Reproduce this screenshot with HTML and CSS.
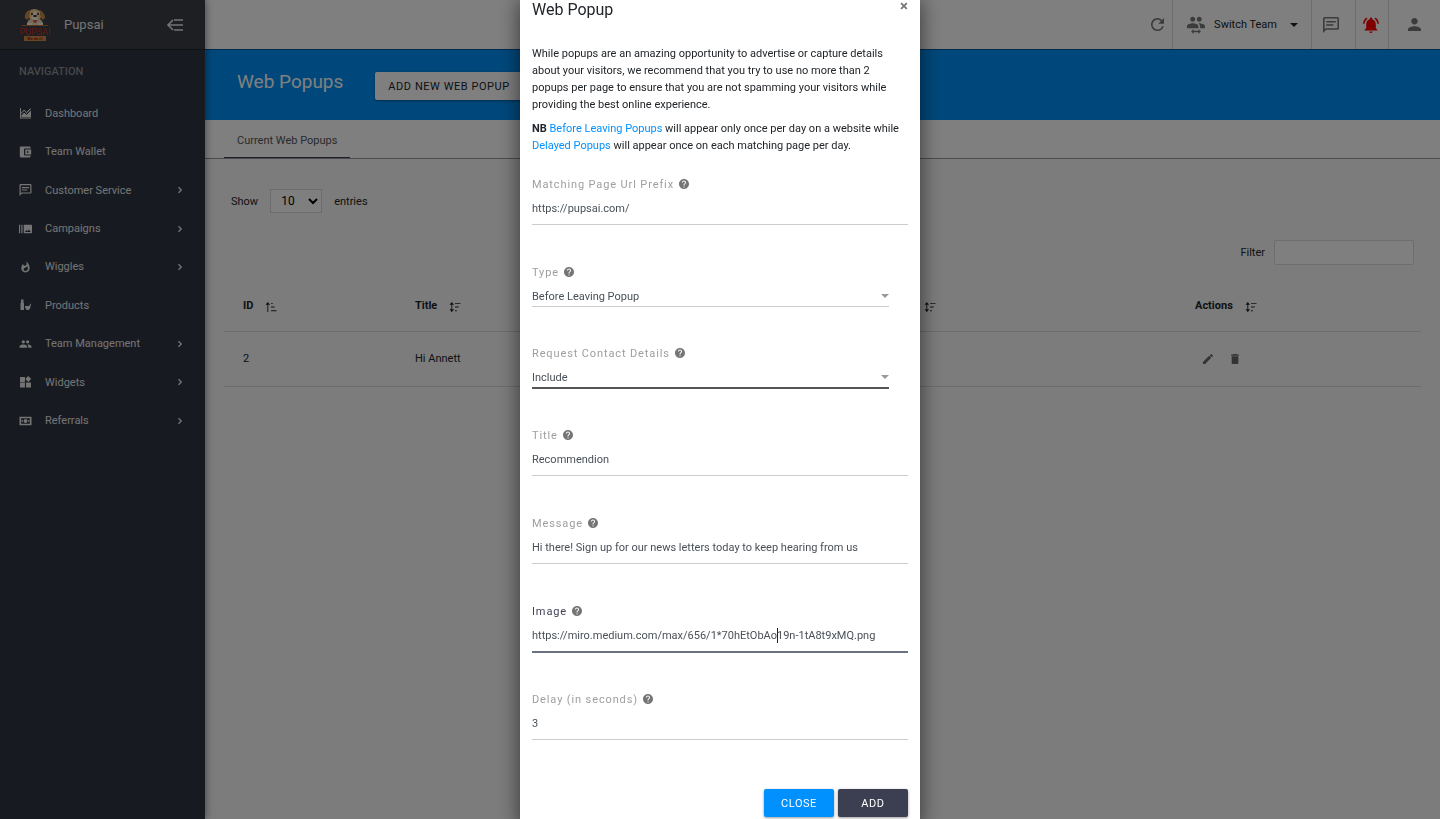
FILE: index.html
```html
<!DOCTYPE html>
<html lang="en">
<head>
    <meta charset="UTF-8">
    <meta name="viewport" content="width=device-width, initial-scale=1.0">
    <title>Pupsai - Web Popups</title>
    <link rel="stylesheet" href="styles.css">
</head>
<body>
    <!-- shared icons -->
    <svg class="sprite" aria-hidden="true">
        <symbol id="i-chart" viewBox="0 0 24 24"><path d="M1 2h2v19h20v2H1z"/><path d="M4 20v-5l5-6 5 4 9-9v16z"/><path d="M3 13l6-7 5 5 8-8" fill="none" stroke="currentColor" stroke-width="2"/><path d="M4 16l5-6 5 5 9-9" fill="none" stroke="#2e3442" stroke-width="2"/></symbol>
        <symbol id="i-wallet" viewBox="2 2 21 20"><path d="M21 18v1c0 1.1-.9 2-2 2H5c-1.11 0-2-.9-2-2V5c0-1.1.89-2 2-2h14c1.1 0 2 .9 2 2v1h-9c-1.11 0-2 .9-2 2v8c0 1.1.89 2 2 2h9zm-9-2h10V8H12v8zm4-2.5c-.83 0-1.5-.67-1.5-1.5s.67-1.5 1.5-1.5 1.5.67 1.5 1.5-.67 1.5-1.5 1.5z"/></symbol>
        <symbol id="i-chat" viewBox="2 2 20 20"><path d="M20 2H4c-1.1 0-2 .9-2 2v18l4-4h14c1.1 0 2-.9 2-2V4c0-1.1-.9-2-2-2zm0 14H5.17L4 17.17V4h16v12zM6 11h9v2H6v-2zm0-4h12v2H6V7z"/></symbol>
        <symbol id="i-burst" viewBox="1 2 22 20"><path d="M1 5h2v14H1zm4 0h2v14H5zm17 0H10c-.55 0-1 .45-1 1v12c0 .55.45 1 1 1h12c.55 0 1-.45 1-1V6c0-.55-.45-1-1-1zM11 17l2.5-3.15L15.29 16l2.5-3.22L21 17H11z"/></symbol>
        <symbol id="i-fire" viewBox="1 0 22 23"><path d="M13.5.67s.74 2.65.74 4.8c0 2.06-1.35 3.73-3.41 3.73-2.07 0-3.63-1.67-3.63-3.73l.03-.36C5.21 7.51 4 10.62 4 14c0 4.42 3.58 8 8 8s8-3.58 8-8C20 8.61 17.41 3.8 13.5.67zM11.71 19c-1.78 0-3.22-1.4-3.22-3.14 0-1.62 1.05-2.76 2.81-3.12 1.77-.36 3.6-1.21 4.62-2.58.39 1.29.59 2.65.59 4.04 0 2.65-2.15 4.8-4.8 4.8z"/></symbol>
        <symbol id="i-bottle" viewBox="0 0 24 24"><path d="M3 1h5v5l1 3v13H2V9l1-3z"/><path d="M11 14h8l3-5 1 1-1 4c0 4-1 6-3 7v1h-5v-1c-2-1-3-3-3-7z"/></symbol>
        <symbol id="i-group" viewBox="1 1 22 22"><path d="M16 11c1.66 0 2.99-1.34 2.99-3S17.66 5 16 5c-1.66 0-3 1.34-3 3s1.34 3 3 3zm-8 0c1.66 0 2.99-1.34 2.99-3S9.66 5 8 5C6.34 5 5 6.34 5 8s1.34 3 3 3zm0 2c-2.33 0-7 1.17-7 3.5V19h14v-2.5c0-2.33-4.67-3.5-7-3.5zm8 0c-.29 0-.62.02-.97.05 1.16.84 1.97 1.97 1.97 3.45V19h6v-2.5c0-2.33-4.67-3.5-7-3.5z"/></symbol>
        <symbol id="i-widgets" viewBox="1 1 22 22"><path d="M2 3h9v9H2zM2 13h9v9H2zM13 13h9v9h-9zM17 1l5.500 5.500L17 12l-5.500-5.500z"/></symbol>
        <symbol id="i-cash" viewBox="1 1 22 22"><path fill-rule="evenodd" d="M1 4h22v16H1zM4 7v10h16V7zM12 8.500a3.500 3.500 0 010 7 3.500 3.500 0 010-7zM5 10h2v4H5zM17 10h2v4h-2z"/></symbol>
        <symbol id="i-chevron" viewBox="0 0 24 24"><path d="M8.590 16.590L13.170 12 8.590 7.410 10 6l6 6-6 6z" stroke="currentColor"/></symbol>
        <symbol id="i-back" viewBox="0 0 18 14"><path d="M7 2L2 7l5 5M2 7h15M8 2h9M8 12h9" fill="none" stroke="currentColor" stroke-width="1.600"/></symbol>
        <symbol id="i-refresh" viewBox="4 4 16 16"><path d="M17.65 6.35A7.958 7.958 0 0012 4c-4.42 0-7.99 3.58-7.99 8s3.57 8 7.99 8c3.73 0 6.84-2.55 7.73-6h-2.08A5.99 5.99 0 0112 18c-3.31 0-6-2.69-6-6s2.690-6 6-6c1.660 0 3.140.690 4.220 1.780L13 11h7V4l-2.350 2.350z"/></symbol>
        <symbol id="i-switch" viewBox="1 2 22 22"><path d="M16 9c1.660 0 3-1.340 3-3s-1.340-3-3-3-3 1.340-3 3 1.340 3 3 3zM8 9c1.660 0 3-1.340 3-3S9.660 3 8 3 5 4.340 5 6s1.340 3 3 3zM8 11c-2.330 0-7 1.170-7 3.500V17h14v-2.500C15 12.170 10.330 11 8 11zM16 11l-1 .050c1.200.850 2 2 2 3.450V17h6v-2.500c0-2.330-4.670-3.500-7-3.500z"/><path d="M6 21l3-3v2h6v-2l3 3-3 3v-2H9v2z"/></symbol>
        <symbol id="i-bell" viewBox="2 2 20 20"><path d="M7.58 4.08L6.15 2.65C3.75 4.48 2.17 7.3 2.03 10.5h2c.15-2.65 1.51-4.97 3.55-6.42zm12.39 6.42h2c-.15-3.2-1.73-6.02-4.12-7.85l-1.42 1.43c2.02 1.45 3.39 3.77 3.54 6.42zM18 11c0-3.07-1.64-5.64-4.5-6.32V4c0-.83-.67-1.5-1.5-1.5s-1.5.67-1.5 1.5v.68C7.63 5.36 6 7.92 6 11v5l-2 2v1h16v-1l-2-2v-5zm-6 11c.14 0 .27-.01.4-.04.65-.14 1.18-.58 1.44-1.18.1-.24.15-.5.15-.78h-4c.01 1.1.9 2 2.01 2z"/></symbol>
        <symbol id="i-person" viewBox="4 4 16 16"><path d="M12 12c2.21 0 4-1.79 4-4s-1.79-4-4-4-4 1.79-4 4 1.79 4 4 4zm0 2c-2.67 0-8 1.34-8 4v2h16v-2c0-2.66-5.33-4-8-4z"/></symbol>
        <symbol id="i-down" viewBox="0 0 10 5"><path d="M0 0h10L5 5z"/></symbol>
        <symbol id="i-sort-asc" viewBox="0 0 12 12"><path d="M2 1h1v10H2zM0 3l2.500-3L5 3zM6 1h2v1H6zM6 5h4v1H6zM6 9h6v1H6z"/></symbol>
        <symbol id="i-sort-desc" viewBox="0 0 12 12"><path d="M2 1h1v10H2zM0 3l2.500-3L5 3zM0 8h5l-2.500 3zM6 1h6v1H6zM6 5h4v1H6zM6 9h2v1H6z"/></symbol>
        <symbol id="i-edit" viewBox="3 3 18 18"><path d="M3 17.25V21h3.75L17.81 9.94l-3.75-3.75L3 17.25zM20.71 7.04a1 1 0 000-1.41l-2.34-2.34a1 1 0 00-1.41 0l-1.83 1.83 3.75 3.75 1.83-1.830z"/></symbol>
        <symbol id="i-delete" viewBox="3 3 18 18"><path d="M6 19c0 1.100.900 2 2 2h8c1.100 0 2-.900 2-2V7H6v12zM19 4h-3.500l-1-1h-5l-1 1H5v2h14V4z"/></symbol>
        <symbol id="i-help" viewBox="2 2 20 20"><path d="M12 2C6.48 2 2 6.48 2 12s4.48 10 10 10 10-4.48 10-10S17.52 2 12 2zm1 17h-2v-2h2v2zm2.07-7.75l-.9.92C13.45 12.9 13 13.5 13 15h-2v-.5c0-1.1.45-2.100 1.170-2.830l1.240-1.260c.370-.360.590-.860.590-1.410 0-1.100-.900-2-2-2s-2 .900-2 2H8c0-2.210 1.790-4 4-4s4 1.790 4 4c0 .880-.360 1.680-.930 2.250z"/></symbol>
    </svg>

    <div class="app">
        <aside class="sidebar">
            <div class="brand">
                <svg class="logo" viewBox="0 0 32 34" aria-hidden="true">
                    <path d="M8 17q0-5 4-6h8q4 1 4 6z" fill="#ecd9bd"/>
                    <path d="M10 3q5-4 11 0l1 6q-2 5-6 5t-6-5z" fill="#edc791"/>
                    <path d="M10 2q-5 3-4 8 2 3 4 0l1-6zM21 2q5 3 5 8-2 3-4 0l-1-6z" fill="#c98a45"/>
                    <path d="M15 3h2l2 7q-1 3-3 3t-4-3z" fill="#fff0d8"/>
                    <circle cx="13" cy="6" r="1" fill="#2a1c14"/>
                    <circle cx="19" cy="6" r="1" fill="#2a1c14"/>
                    <ellipse cx="16" cy="8" rx="2" ry="1" fill="#2a1c14"/>
                    <path d="M14 12h4q0 3-2 3t-2-3z" fill="#c9604a"/>
                    <path d="M8 15h5v2H8zM19 15h5v2h-5z" fill="#fff0d8"/>
                    <path d="M3 17h26v1H3z" fill="#b5713c"/>
                    <text x="16" y="27" class="logo-name">PUPSAI</text>
                    <path d="M5 28h22v5H5z" fill="#d08a4a"/>
                    <text x="16" y="32" class="logo-tag">We do it!</text>
                </svg>
                <span class="brand-name">Pupsai</span>
                <button class="collapse" aria-label="Collapse menu"><svg><use href="#i-back"/></svg></button>
            </div>
            <h2 class="nav-title">NAVIGATION</h2>
            <nav class="nav">
                <a href="#"><svg><use href="#i-chart"/></svg>Dashboard</a>
                <a href="#"><svg><use href="#i-wallet"/></svg>Team Wallet</a>
                <a href="#"><svg><use href="#i-chat"/></svg>Customer Service<svg class="more"><use href="#i-chevron"/></svg></a>
                <a href="#"><svg><use href="#i-burst"/></svg>Campaigns<svg class="more"><use href="#i-chevron"/></svg></a>
                <a href="#"><svg><use href="#i-fire"/></svg>Wiggles<svg class="more"><use href="#i-chevron"/></svg></a>
                <a href="#"><svg><use href="#i-bottle"/></svg>Products</a>
                <a href="#"><svg><use href="#i-group"/></svg>Team Management<svg class="more"><use href="#i-chevron"/></svg></a>
                <a href="#"><svg><use href="#i-widgets"/></svg>Widgets<svg class="more"><use href="#i-chevron"/></svg></a>
                <a href="#"><svg><use href="#i-cash"/></svg>Referrals<svg class="more"><use href="#i-chevron"/></svg></a>
            </nav>
        </aside>

        <div class="main">
            <header class="topbar">
                <button class="top-btn refresh" aria-label="Refresh"><svg><use href="#i-refresh"/></svg></button>
                <button class="top-btn switch"><svg class="team"><use href="#i-switch"/></svg>Switch Team<svg class="down"><use href="#i-down"/></svg></button>
                <button class="top-btn chat" aria-label="Messages"><svg><use href="#i-chat"/></svg></button>
                <button class="top-btn bell" aria-label="Notifications"><svg><use href="#i-bell"/></svg></button>
                <button class="top-btn user" aria-label="Account"><svg><use href="#i-person"/></svg></button>
            </header>
            <div class="page-head">
                <h1>Web Popups</h1>
                <button class="btn btn-light">ADD NEW WEB POPUP</button>
            </div>
            <div class="tabs">
                <a href="#" class="tab">Current Web Popups</a>
            </div>
            <div class="content">
                <div class="entries">
                    <label for="entries">Show</label>
                    <select id="entries"><option>10</option><option>25</option><option>50</option></select>
                    <span>entries</span>
                </div>
                <div class="filter">
                    <label for="filter">Filter</label>
                    <input type="text" id="filter">
                </div>
                <table>
                    <colgroup>
                        <col class="c-id"><col class="c-title"><col class="c-type"><col class="c-delay"><col class="c-actions">
                    </colgroup>
                    <thead>
                        <tr>
                            <th>ID<svg><use href="#i-sort-asc"/></svg></th>
                            <th>Title<svg><use href="#i-sort-desc"/></svg></th>
                            <th></th>
                            <th>Delay<svg><use href="#i-sort-desc"/></svg></th>
                            <th>Actions<svg><use href="#i-sort-desc"/></svg></th>
                        </tr>
                    </thead>
                    <tbody>
                        <tr>
                            <td>2</td>
                            <td>Hi Annett</td>
                            <td></td>
                            <td></td>
                            <td class="actions">
                                <button aria-label="Edit"><svg><use href="#i-edit"/></svg></button>
                                <button aria-label="Delete"><svg><use href="#i-delete"/></svg></button>
                            </td>
                        </tr>
                    </tbody>
                </table>
            </div>
        </div>
    </div>

    <div class="overlay">
        <form class="modal" role="dialog" aria-labelledby="modal-title">
            <div class="modal-head">
                <h2 id="modal-title">Web Popup</h2>
                <button type="button" class="close" aria-label="Close">&times;</button>
            </div>
            <div class="intro">
                <p>While popups are an amazing opportunity to advertise or capture details about your visitors, we recommend that you try to use no more than 2 popups per page to ensure that you are not spamming your visitors while providing the best online experience.</p>
                <p><b>NB</b> <a href="#">Before Leaving Popups</a> will appear only once per day on a website while <a href="#">Delayed Popups</a> will appear once on each matching page per day.</p>
            </div>

            <div class="field">
                <label for="prefix">Matching Page Url Prefix <svg><use href="#i-help"/></svg></label>
                <input type="text" id="prefix" value="https://pupsai.com/">
            </div>
            <div class="field field-select">
                <label for="type">Type <svg><use href="#i-help"/></svg></label>
                <div class="select">
                    <select id="type"><option>Before Leaving Popup</option><option>Delayed Popup</option></select>
                    <svg><use href="#i-down"/></svg>
                </div>
            </div>
            <div class="field field-select">
                <label for="contact">Request Contact Details <svg><use href="#i-help"/></svg></label>
                <div class="select active">
                    <select id="contact"><option>Include</option><option>Exclude</option></select>
                    <svg><use href="#i-down"/></svg>
                </div>
            </div>
            <div class="field">
                <label for="title">Title <svg><use href="#i-help"/></svg></label>
                <input type="text" id="title" value="Recommendion">
            </div>
            <div class="field">
                <label for="message">Message <svg><use href="#i-help"/></svg></label>
                <input type="text" id="message" value="Hi there! Sign up for our news letters today to keep hearing from us">
            </div>
            <div class="field focused">
                <label for="image">Image <svg><use href="#i-help"/></svg></label>
                <input type="text" id="image" value="https://miro.medium.com/max/656/1*70hEtObAo19n-1tA8t9xMQ.png">
                <span class="caret"></span>
            </div>
            <div class="field">
                <label for="delay">Delay (in seconds) <svg><use href="#i-help"/></svg></label>
                <input type="text" id="delay" value="3">
            </div>

            <div class="modal-foot">
                <button type="button" class="btn btn-primary">CLOSE</button>
                <button type="button" class="btn btn-dark">ADD</button>
            </div>
        </form>
    </div>
</body>
</html>
```
FILE: styles.css
```css
* {
    box-sizing: border-box;
}

body {
    margin: 0;
    font-family: Roboto, sans-serif;
    font-size: 11px;
    color: #212529;
    background-color: #f8f8f8;
    overflow: hidden;
}

button,
input,
select {
    font-family: inherit;
    font-size: inherit;
    color: inherit;
}

button {
    border: none;
    background: none;
    padding: 0;
    cursor: pointer;
}

a {
    color: #0091ff;
    text-decoration: none;
}

svg {
    fill: currentColor;
    flex: none;
}

.sprite {
    display: none;
}

.app {
    display: flex;
    min-height: 100vh;
}

/* sidebar */
.sidebar {
    position: relative;
    width: 205px;
    flex: none;
    background-color: #2e3442;
    color: #e8e8e8;
    box-shadow: 0 0 8px rgba(0, 0, 0, 0.5);
}

.brand {
    display: flex;
    align-items: center;
    height: 50px;
    padding: 0 21px 0 19px;
    background-color: #3b3e47;
    border-bottom: 1px solid #22252d;
}

.logo {
    width: 32px;
    height: 34px;
}

.logo-name {
    font-size: 9px;
    text-anchor: middle;
    fill: #c8321e;
}

.logo-tag {
    font-size: 4px;
    font-weight: 700;
    text-anchor: middle;
    fill: #a02010;
}

.brand-name {
    font-size: 13px;
    margin-left: 13px;
}

.collapse {
    margin-left: auto;
}

.collapse svg {
    display: block;
    width: 18px;
    height: 14px;
}

.nav-title {
    margin: 0;
    padding: 14px 19px 13px;
    font-size: 11px;
    line-height: 16px;
    font-weight: 500;
    color: #8e9096;
}

.nav {
    display: grid;
    grid-auto-rows: 1fr;
    min-height: 346px;
    margin-top: 1px;
}

.nav a {
    display: flex;
    align-items: center;
    padding: 0 19px;
    color: inherit;
}

.nav svg {
    width: 13px;
    height: 12px;
    margin-right: 13px;
}

.nav .more {
    width: 12px;
    margin: 0 0 0 auto;
}

/* main column */
.main {
    flex: 1;
    min-width: 0;
}

.topbar {
    display: flex;
    justify-content: flex-end;
    height: 49px;
    background-color: #fff;
}

.top-btn {
    display: flex;
    align-items: center;
    justify-content: center;
    color: #777;
    border-left: 1px solid #dcdcdc;
}

.top-btn svg {
    width: 16px;
    height: 16px;
}

.refresh {
    width: 30px;
    border: none;
}

.refresh svg {
    width: 13px;
    height: 13px;
}

.switch {
    padding: 0 13px 0 14px;
    color: #212529;
}

.switch .team {
    width: 18px;
    height: 18px;
    margin-right: 9px;
    color: #777;
}

.switch .down {
    width: 8px;
    height: 4px;
    margin-left: 13px;
}

.chat {
    width: 44px;
    padding-right: 5px;
}

.bell {
    width: 33px;
    padding-right: 2px;
    color: #f00;
}

.user {
    width: 52px;
}

.user svg {
    width: 13px;
    height: 13px;
}

.page-head {
    display: flex;
    align-items: center;
    height: 71px;
    padding: 2px 32px 0;
    background-color: #0091f8;
    border-top: 1px solid #00529a;
}

.page-head h1 {
    margin: 0 32px 0 0;
    padding-bottom: 8px;
    font-size: 19px;
    line-height: 24px;
    font-weight: 400;
    color: #fff;
}

.btn {
    height: 28px;
    padding: 0 13px;
    border-radius: 2px;
    letter-spacing: 0.05em;
    box-shadow: 0 1px 3px rgba(0, 0, 0, 0.4);
}

.btn-light {
    background-color: #fff;
}

.tabs {
    display: flex;
    height: 39px;
    padding-left: 19px;
    background-color: #fff;
    border-bottom: 1px solid #999;
}

.tab {
    padding: 1px 13px 0;
    line-height: 40px;
    color: #555;
    border-bottom: 1px solid #3c3f55;
}

.content {
    padding: 30px 19px 0;
}

.entries {
    display: flex;
    align-items: center;
    gap: 12px;
    padding-left: 7px;
}

.entries select {
    width: 52px;
    height: 24px;
    padding: 0 0 0 6px;
    font-size: 12px;
    color: #000;
    background-color: #fff;
    border: 1px solid #d8d8d8;
}

.filter {
    display: flex;
    align-items: center;
    justify-content: flex-end;
    gap: 9px;
    margin: 27px 7px 0 0;
}

.filter input {
    width: 140px;
    height: 25px;
    background-color: #fff;
    border: 1px solid #ddd;
    border-radius: 2px;
}

table {
    width: 100%;
    margin-top: 17px;
    border-collapse: collapse;
    table-layout: fixed;
}

.c-id {
    width: 172px;
}

.c-title {
    width: 240px;
}

.c-type {
    width: 230px;
}

.c-delay {
    width: 310px;
}

th,
td {
    height: 55px;
    padding: 0 19px;
    text-align: left;
    border-bottom: 1px solid #d8d8d8;
}

th {
    height: 49px;
    font-weight: 700;
}

th svg {
    width: 12px;
    height: 11px;
    margin-left: 12px;
    vertical-align: -4px;
}

.actions button {
    margin: 0 14px 0 8px;
    color: #666;
    vertical-align: middle;
}

.actions button + button {
    margin-left: 0;
}

.actions svg {
    display: block;
    width: 10px;
    height: 10px;
}

/* modal */
.overlay {
    position: fixed;
    inset: 0;
    overflow: hidden;
    background-color: rgba(0, 0, 0, 0.5);
}

.modal {
    width: 400px;
    max-width: 100%;
    min-height: 100%;
    margin: 0 auto;
    padding: 0 12px 12px;
    background-color: #fff;
    box-shadow: 0 0 20px rgba(0, 0, 0, 0.6);
}

.modal-head {
    display: flex;
    justify-content: space-between;
    height: 45px;
}

.modal-head h2 {
    margin: 0;
    font-size: 16px;
    line-height: 20px;
    font-weight: 400;
}

.close {
    height: 12px;
    font-size: 15px;
    line-height: 12px;
    font-weight: 700;
    color: #777;
}

.intro {
    padding-bottom: 14px;
    line-height: 17px;
}

.intro p {
    margin: 0 0 7px;
}

.intro p:last-child {
    margin-bottom: 8px;
}

.field {
    position: relative;
    margin-bottom: 39px;
}

.field-select {
    margin-bottom: 38px;
}

.field label {
    display: flex;
    align-items: center;
    gap: 5px;
    height: 16px;
    letter-spacing: 0.08em;
    color: #9e9e9e;
}

.field label svg {
    width: 10px;
    height: 10px;
    color: #757575;
}

.field input {
    display: block;
    width: 100%;
    height: 33px;
    padding: 0;
    color: #495057;
    background: none;
    border: none;
    border-bottom: 1px solid #ccc;
    outline: none;
}

.field.focused {
    margin-bottom: 38px;
}

.focused label {
    color: #3c3f55;
}

.focused input {
    height: 34px;
    border-bottom: 2px solid #6c7080;
}

/* text cursor over the focused input */
.caret {
    position: absolute;
    left: 245px;
    top: 25px;
    width: 1px;
    height: 15px;
    background-color: #222;
}

.select {
    position: relative;
    margin-right: 19px;
}

.select select {
    display: block;
    width: 100%;
    height: 27px;
    padding: 6px 0 0;
    color: #495057;
    appearance: none;
    background: none;
    border: none;
    border-bottom: 1px solid #ccc;
    border-radius: 0;
}

.select.active select {
    height: 28px;
    border-bottom: 2px solid #555;
}

.select svg {
    position: absolute;
    right: 0;
    top: 14px;
    width: 8px;
    height: 4px;
    color: #999;
}

.modal-foot {
    display: flex;
    justify-content: flex-end;
    gap: 4px;
    padding-top: 10px;
}

.modal-foot .btn {
    min-width: 70px;
    color: #fff;
}

.btn-primary {
    background-color: #0091ff;
}

.btn-dark {
    background-color: #3b3f51;
}
```
